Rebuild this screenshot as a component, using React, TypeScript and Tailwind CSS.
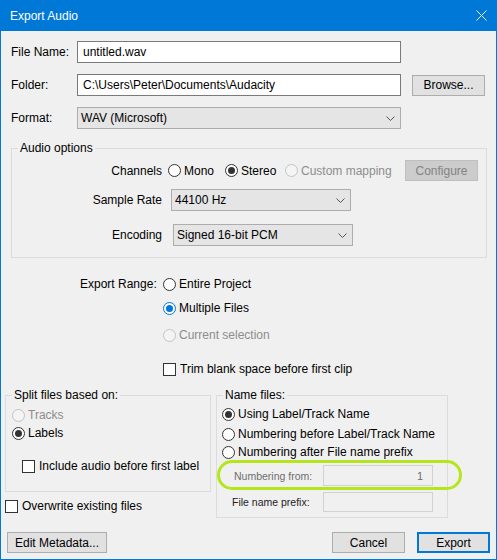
import React from "react";

type RState = "off" | "on" | "blue" | "disabled";

function Radio({ state, label, className = "" }: { state: RState; label: string; className?: string }) {
  const ring =
    state === "blue"
      ? "border-[#0078d7] bg-white"
      : state === "disabled"
      ? "border-[#c4c4c4] bg-[#f4f4f4]"
      : "border-[#333333] bg-white";
  const dot = state === "blue" ? "bg-[#0078d7]" : "bg-[#333333]";
  return (
    <div className={`flex items-center gap-[3px] ${className}`}>
      <span className={`w-[13px] h-[13px] rounded-full border flex items-center justify-center shrink-0 ${ring}`}>
        {(state === "on" || state === "blue") && <span className={`w-[7px] h-[7px] rounded-full ${dot}`} />}
      </span>
      <span className={state === "disabled" ? "text-[#8d8d8d] whitespace-nowrap" : "text-black whitespace-nowrap"}>{label}</span>
    </div>
  );
}

function Check({ label, className = "" }: { label: string; className?: string }) {
  return (
    <div className={`flex items-center gap-[4px] h-[16px] ${className}`}>
      <span className="w-[13px] h-[13px] border border-[#333333] bg-white shrink-0" />
      <span className="whitespace-nowrap">{label}</span>
    </div>
  );
}

function Chevron() {
  return (
    <svg width="9" height="5" viewBox="0 0 9 5" className="shrink-0">
      <polyline points="0.5,0.5 4.5,4.5 8.5,0.5" fill="none" stroke="#555" strokeWidth="1" />
    </svg>
  );
}

function Select({ value, className = "" }: { value: string; className?: string }) {
  return (
    <div className={`flex items-center justify-between h-[22px] bg-[#e5e5e5] border border-[#adadad] pl-[3px] pr-[5px] ${className}`}>
      <span className="whitespace-nowrap">{value}</span>
      <Chevron />
    </div>
  );
}

function Button({ label, className = "", disabled = false, primary = false }: { label: string; className?: string; disabled?: boolean; primary?: boolean }) {
  const cls = disabled
    ? "bg-[#cccccc] border border-[#bfbfbf] text-[#838383]"
    : primary
    ? "bg-[#e1e1e1] border-2 border-[#0078d7] text-black"
    : "bg-[#e1e1e1] border border-[#adadad] text-black";
  return <div className={`flex items-center justify-center h-[21px] ${cls} ${className}`}>{label}</div>;
}

export default function App() {
  return (
    <div className="relative w-[497px] h-[560px] overflow-hidden bg-[#f0f0f0] border-x border-b border-[#0078d7] font-['Liberation_Sans',Arial,sans-serif] text-[12px] leading-[16px] text-black flex flex-col">
      {/* Title bar */}
      <div className="h-[31px] bg-[#0078d7] flex items-center justify-between pl-[9px] pr-[9px] shrink-0">
        <span className="text-white text-[12px]">Export Audio</span>
        <svg width="11" height="11" viewBox="0 0 11 11">
          <line x1="0.5" y1="0.5" x2="10.5" y2="10.5" stroke="white" strokeWidth="1" />
          <line x1="10.5" y1="0.5" x2="0.5" y2="10.5" stroke="white" strokeWidth="1" />
        </svg>
      </div>

      {/* File Name */}
      <div className="flex items-center mt-[10px] ml-[10px] h-[22px]">
        <span className="w-[66px]">File Name:</span>
        <div className="w-[324px] h-[22px] border border-[#7a7a7a] bg-white flex items-center pl-[5px]">untitled.wav</div>
      </div>

      {/* Folder */}
      <div className="flex items-center mt-[11px] ml-[10px] h-[22px]">
        <span className="w-[66px]">Folder:</span>
        <div className="w-[324px] h-[22px] border border-[#7a7a7a] bg-white flex items-center pl-[5px] whitespace-nowrap overflow-hidden">
          C:\Users\Peter\Documents\Audacity
        </div>
        <Button label="Browse..." className="w-[73px] ml-[11px]" />
      </div>

      {/* Format */}
      <div className="flex items-center mt-[11px] ml-[10px] h-[22px]">
        <span className="w-[66px]">Format:</span>
        <Select value="WAV (Microsoft)" className="w-[324px]" />
      </div>

      {/* Audio options */}
      <fieldset className="mt-[11px] ml-[10px] w-[476px] border border-[#dcdcdc] pt-[4px] pb-[11px]">
        <legend className="ml-[6px] px-[2px] leading-[16px]">Audio options</legend>
        <div className="flex items-center h-[21px]">
          <span className="w-[150px] text-right">Channels</span>
          <Radio state="off" label="Mono" className="ml-[6px] w-[57px]" />
          <Radio state="on" label="Stereo" className="w-[60px]" />
          <Radio state="disabled" label="Custom mapping" className="w-[120px]" />
          <Button label="Configure" disabled className="w-[73px]" />
        </div>
        <div className="flex items-center mt-[8px] h-[22px]">
          <span className="w-[150px] text-right">Sample Rate</span>
          <Select value="44100 Hz" className="ml-[9px] w-[180px]" />
        </div>
        <div className="flex items-center mt-[13px] h-[22px]">
          <span className="w-[150px] text-right">Encoding</span>
          <Select value="Signed 16-bit PCM" className="ml-[11px] w-[180px]" />
        </div>
      </fieldset>

      {/* Export range */}
      <div className="flex items-center mt-[16px] h-[20px]">
        <span className="ml-[79px] w-[83px] whitespace-nowrap">Export Range:</span>
        <Radio state="off" label="Entire Project" />
      </div>
      <div className="flex items-center mt-[4px] h-[20px] ml-[162px]">
        <Radio state="blue" label="Multiple Files" />
      </div>
      <div className="flex items-center mt-[7px] h-[20px] ml-[162px]">
        <Radio state="disabled" label="Current selection" />
      </div>
      <div className="flex items-center mt-[14px] h-[20px] ml-[162px]">
        <Check label="Trim blank space before first clip" />
      </div>

      {/* Bottom groups */}
      <div className="flex items-start mt-[8px]">
        <div className="ml-[4px] flex flex-col">
          <fieldset className="w-[206px] border border-[#dcdcdc] pt-[4px] pb-[17px] pl-[6px]">
            <legend className="ml-[0px] px-[2px] leading-[16px]">Split files based on:</legend>
            <Radio state="disabled" label="Tracks" className="h-[16px]" />
            <Radio state="on" label="Labels" className="h-[16px] mt-[2px]" />
            <Check label="Include audio before first label" className="mt-[17px] ml-[10px]" />
          </fieldset>
          <Check label="Overwrite existing files" className="mt-[6px]" />
        </div>

        <fieldset className="ml-[5px] w-[232px] border border-[#dcdcdc] pt-[3px] pb-[5px] pl-[5px]">
          <legend className="ml-[1px] px-[2px] leading-[16px]">Name files:</legend>
          <Radio state="on" label="Using Label/Track Name" className="h-[16px]" />
          <Radio state="off" label="Numbering before Label/Track Name" className="h-[16px] mt-[4px]" />
          <Radio state="off" label="Numbering after File name prefix" className="h-[16px] mt-[2px]" />
          <div className="flex items-center mt-[5px] h-[21px] ml-[12px]">
            <span className="w-[89px] text-[10.5px] text-[#6d6d6d] whitespace-nowrap">Numbering from:</span>
            <div className="w-[110px] h-[21px] border border-[#d2d2d2] bg-[#f0f0f0] flex items-center justify-end pr-[9px] text-[#6d6d6d] text-[11px]">
              1
            </div>
          </div>
          <div className="flex items-center mt-[6px] h-[20px] ml-[10px]">
            <span className="w-[91px] text-[10.5px] text-[#222] whitespace-nowrap">File name prefix:</span>
            <div className="w-[110px] h-[20px] border border-[#d2d2d2] bg-[#f0f0f0]" />
          </div>
        </fieldset>
      </div>

      {/* Buttons */}
      <div className="flex items-center mt-[14px]">
        <Button label="Edit Metadata..." className="ml-[6px] w-[100px]" />
        <div className="flex-1" />
        <Button label="Cancel" className="w-[73px]" />
        <Button label="Export" primary className="w-[73px] ml-[12px] mr-[6px]" />
      </div>

      {/* Annotation highlight */}
      <div className="absolute left-[216px] top-[460px] w-[245px] h-[30px] border-[3px] border-[#b5e61d] rounded-[15px] pointer-events-none" />
    </div>
  );
}
